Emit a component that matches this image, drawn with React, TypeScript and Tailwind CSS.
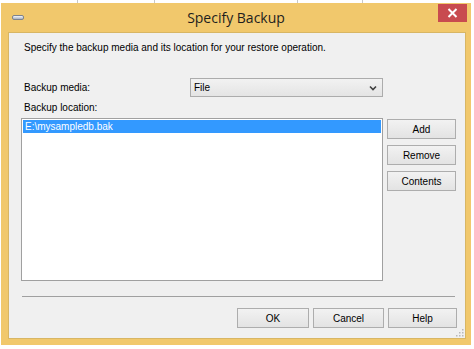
import React from "react";

const btn =
  "h-[20px] border border-[#adadad] bg-gradient-to-b from-[#f2f2f2] to-[#e3e3e3] text-[10px] text-black flex items-center justify-center";

function Btn({ label, className = "" }: { label: string; className?: string }) {
  return <div className={`${btn} ${className}`}>{label}</div>;
}

export default function App() {
  return (
    <div
      className="w-[474px] h-[349px] bg-white overflow-hidden"
      style={{ fontFamily: '"Liberation Sans", Arial, sans-serif' }}
    >
      {/* background window peeking above */}
      <div className="h-[3px] flex">
        <div className="w-[78px] border-r border-[#c8c8c8]" />
        <div className="w-[77px] border-r border-[#c8c8c8]" />
        <div className="w-[143px] border-r border-[#c8c8c8]" />
        <div className="w-[65px] border-r border-[#c8c8c8]" />
      </div>

      {/* dialog frame */}
      <div className="ml-[1px] w-[470px] h-[342px] bg-[#f1c86c] flex flex-col">
        <div className="h-[29px] shrink-0 flex items-start">
          <div className="w-[33px] h-full shrink-0 flex items-center pl-[11px]">
            <div className="w-[12px] h-[5px] rounded-[2px] border border-[#7d838e] bg-gradient-to-b from-[#f4f6fa] to-[#aab2c0]" />
          </div>
          <div
            className="flex-1 h-full flex items-center justify-center text-[14px] text-[#1e1e1e]"
            style={{ fontFamily: '"Open Sans", "Noto Sans", sans-serif' }}
          >
            Specify Backup
          </div>
          <svg className="shrink-0 mt-[1px] mr-[4px] block" width="29" height="18" viewBox="0 0 29 18">
            <rect x="0" y="0" width="29" height="18" fill="#c84b4f" />
            <path d="M10.5 5L18.5 13M18.5 5L10.5 13" stroke="white" strokeWidth="2" />
          </svg>
        </div>

        {/* client area */}
        <div className="ml-[7px] w-[458px] h-[307px] bg-[#f0f0f0] border border-[#d8b664] flex flex-col relative">
          <div className="mt-[8px] pl-[15px] h-[14px] leading-[14px] text-[10px] text-black">
            Specify the backup media and its location for your restore operation.
          </div>

          <div className="mt-[23px] flex items-center h-[19px]">
            <div className="pl-[15px] w-[181px] text-[10px] text-black">Backup media:</div>
            <div className="w-[193px] h-[19px] border border-[#acacac] bg-gradient-to-b from-[#f2f2f2] to-[#e4e4e4] flex items-center justify-between pl-[3px] pr-[5px]">
              <span className="text-[10px] text-black">File</span>
              <svg width="8" height="6" viewBox="0 0 8 6">
                <path d="M1 1.5L4 4.5L7 1.5" stroke="#404040" strokeWidth="1.6" fill="none" />
              </svg>
            </div>
          </div>

          <div className="mt-[4px] pl-[15px] h-[14px] leading-[14px] text-[10px] text-black">
            Backup location:
          </div>

          <div className="mt-[3px] flex pl-[12px] gap-[4px]">
            <div className="w-[362px] h-[163px] bg-white border border-[#a0a0a0] p-[1px]">
              <div className="h-[13px] bg-[#3399ff] text-white text-[10px] leading-[13px] pl-[2px]">
                E:\mysampledb.bak
              </div>
            </div>
            <div className="flex flex-col gap-[6px] mt-[1px]">
              <Btn label="Add" className="w-[69px] border-[#4c8fd6] bg-gradient-to-b from-[#eef4fa] to-[#e0e9f3]" />
              <Btn label="Remove" className="w-[69px]" />
              <Btn label="Contents" className="w-[69px]" />
            </div>
          </div>

          <div className="mt-[15px] ml-[13px] w-[433px] h-0 border-t border-[#a0a0a0]" />

          <div className="mt-[11px] flex justify-end gap-[4px] pr-[8px]">
            <Btn label="OK" className="w-[72px]" />
            <Btn label="Cancel" className="w-[71px]" />
            <Btn label="Help" className="w-[69px]" />
          </div>

          {/* size grip */}
          <svg className="absolute right-[1px] bottom-[1px]" width="8" height="8" viewBox="0 0 8 8">
            <g fill="#b8b8b8">
              <rect x="6" y="0" width="1.5" height="1.5" />
              <rect x="3" y="3" width="1.5" height="1.5" />
              <rect x="6" y="3" width="1.5" height="1.5" />
              <rect x="0" y="6" width="1.5" height="1.5" />
              <rect x="3" y="6" width="1.5" height="1.5" />
              <rect x="6" y="6" width="1.5" height="1.5" />
            </g>
          </svg>
        </div>
      </div>
    </div>
  );
}
